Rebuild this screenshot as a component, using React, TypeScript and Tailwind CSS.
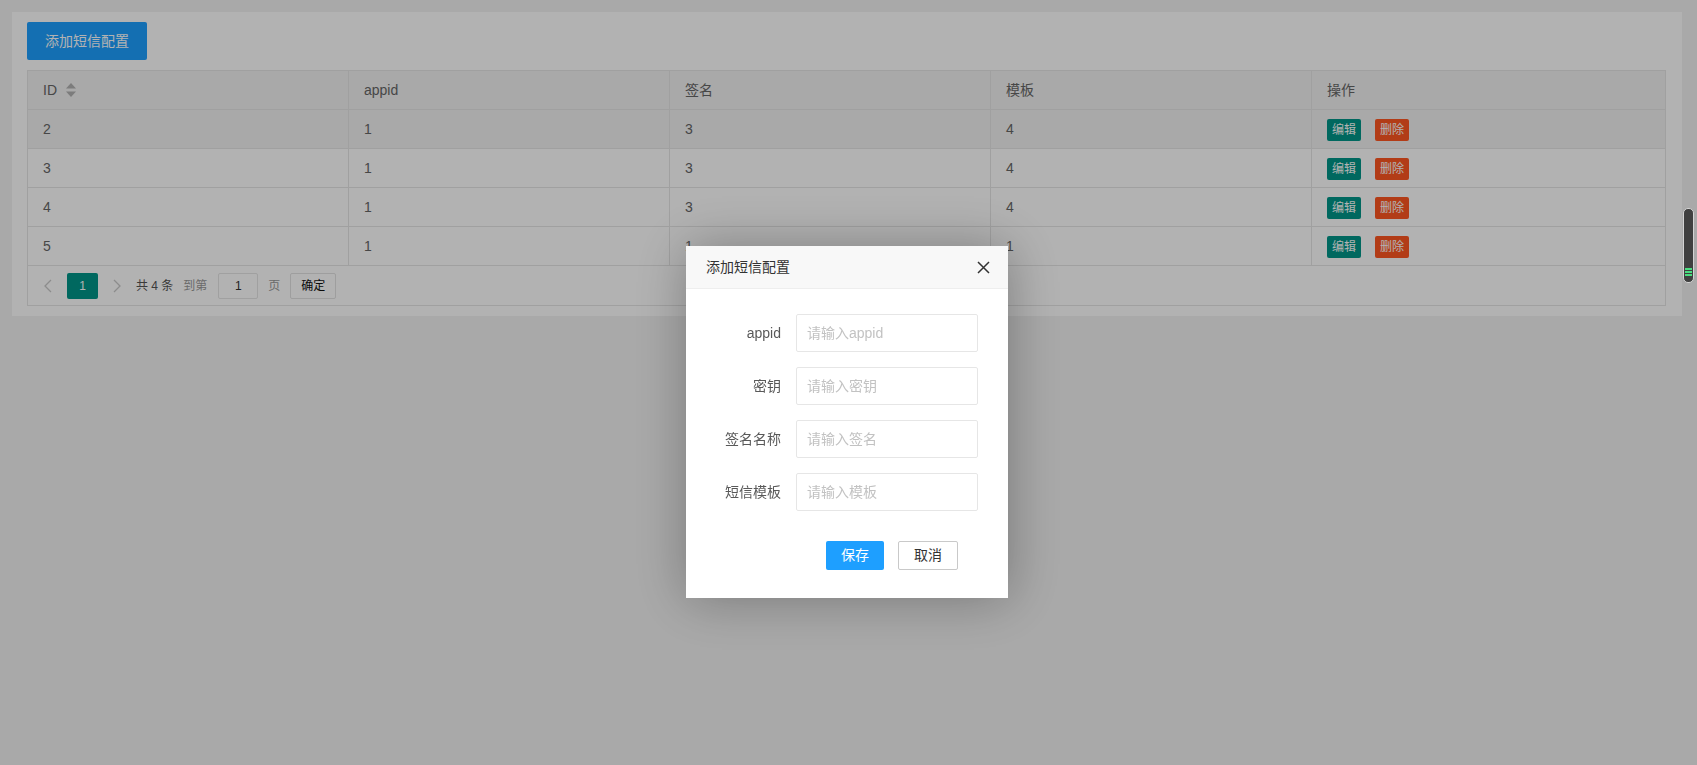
import React from 'react';

const FONT = { fontFamily: '"Liberation Sans", "Noto Sans CJK SC", sans-serif' };

interface Row {
  id: number;
  appid: string;
  sign: string;
  tpl: string;
}

const rows: Row[] = [
  { id: 2, appid: '1', sign: '3', tpl: '4' },
  { id: 3, appid: '1', sign: '3', tpl: '4' },
  { id: 4, appid: '1', sign: '3', tpl: '4' },
  { id: 5, appid: '1', sign: '1', tpl: '1' },
];

const COLS = 'grid grid-cols-[321px_321px_321px_321px_1fr]';

const SortIcon = () => (
  <svg width="10" height="14" viewBox="0 0 10 14" className="ml-[9px]">
    <path d="M5 0 L10 5.5 L0 5.5 Z" fill="#b2b2b2" />
    <path d="M0 8.5 L10 8.5 L5 14 Z" fill="#b2b2b2" />
  </svg>
);

const Cell: React.FC<{ children?: React.ReactNode; last?: boolean }> = ({ children, last }) => (
  <div
    className={`h-[38px] flex items-center px-[15px] text-[14px] text-[#666] ${
      last ? '' : 'border-r border-[#e6e6e6]'
    }`}
  >
    {children}
  </div>
);

const Field: React.FC<{ label: string; placeholder: string }> = ({ label, placeholder }) => (
  <div className="flex">
    <label className="w-[110px] pr-[15px] text-right leading-[38px] text-[14px] text-[#595959]">{label}</label>
    <input
      placeholder={placeholder}
      className="w-[182px] h-[38px] border border-[#e6e6e6] rounded-[2px] pl-[10px] text-[14px] outline-none placeholder:text-[#c2c2c2] bg-white"
    />
  </div>
);

export default function App() {
  return (
    <div className="min-h-[765px] bg-[#f2f2f2] pt-[12px] pl-[12px] pr-[15px]" style={FONT}>
      <div className="bg-white pt-[10px] pb-[10px] pl-[15px] pr-[16px]">
        <button className="h-[38px] px-[18px] bg-[#1e9fff] text-white text-[14px] rounded-[2px]">添加短信配置</button>

        <div className="mt-[10px] border border-[#e6e6e6]">
          <div className={`${COLS} bg-[#f2f2f2] border-b border-[#e6e6e6]`}>
            <Cell>
              ID
              <SortIcon />
            </Cell>
            <Cell>appid</Cell>
            <Cell>签名</Cell>
            <Cell>模板</Cell>
            <Cell last>操作</Cell>
          </div>
          {rows.map((r, i) => (
            <div key={r.id} className={`${COLS} border-b border-[#e6e6e6] ${i === 0 ? 'bg-[#f2f2f2]' : 'bg-white'}`}>
              <Cell>{r.id}</Cell>
              <Cell>{r.appid}</Cell>
              <Cell>{r.sign}</Cell>
              <Cell>{r.tpl}</Cell>
              <Cell last>
                <span className="mt-[1px] h-[22px] px-[5px] leading-[22px] text-[12px] rounded-[2px] bg-[#009688] text-white">编辑</span>
                <span className="mt-[1px] ml-[14px] h-[22px] px-[5px] leading-[22px] text-[12px] rounded-[2px] bg-[#ff5722] text-white">删除</span>
              </Cell>
            </div>
          ))}

          <div className="h-[39px] flex items-center pl-[5px] text-[12px]">
            <span className="w-[30px] flex justify-center">
              <svg width="8" height="14" viewBox="0 0 8 14">
                <path d="M7 1 L1 7 L7 13" stroke="#c9c9c9" strokeWidth="1.3" fill="none" />
              </svg>
            </span>
            <span className="ml-[4px] w-[31px] h-[26px] flex items-center justify-center bg-[#009688] text-white rounded-[2px]">1</span>
            <span className="ml-[4px] w-[30px] flex justify-center">
              <svg width="8" height="14" viewBox="0 0 8 14">
                <path d="M1 1 L7 7 L1 13" stroke="#c9c9c9" strokeWidth="1.3" fill="none" />
              </svg>
            </span>
            <span className="ml-[4px] text-[#555]">共 4 条</span>
            <span className="ml-[10px] text-[#999]">到第</span>
            <span className="ml-[11px] w-[40px] h-[26px] border border-[#e6e6e6] rounded-[2px] flex items-center justify-center text-[#333]">
              1
            </span>
            <span className="ml-[10px] text-[#999]">页</span>
            <span className="ml-[10px] w-[46px] h-[26px] border border-[#e2e2e2] rounded-[2px] flex items-center justify-center text-[#111] bg-white">
              确定
            </span>
          </div>
        </div>
      </div>

      {/* 遮罩 */}
      <div className="fixed inset-0 bg-black/30" />

      {/* 弹窗 */}
      <div className="fixed left-[686px] top-[246px] w-[322px] h-[352px] bg-white shadow-[1px_1px_50px_rgba(0,0,0,0.3)]">
        <div className="h-[43px] bg-[#f8f8f8] border-b border-[#eee] flex items-center justify-between pl-[20px] pr-[18px]">
          <span className="text-[14px] text-[#333]">添加短信配置</span>
          <svg width="13" height="13" viewBox="0 0 13 13">
            <path d="M1 1 L12 12 M12 1 L1 12" stroke="#333" strokeWidth="1.5" />
          </svg>
        </div>
        <div className="pt-[25px] flex flex-col gap-[15px]">
          <Field label="appid" placeholder="请输入appid" />
          <Field label="密钥" placeholder="请输入密钥" />
          <Field label="签名名称" placeholder="请输入签名" />
          <Field label="短信模板" placeholder="请输入模板" />
          <div className="flex ml-[140px] mt-[15px]">
            <button className="h-[29px] w-[58px] bg-[#1e9fff] text-white text-[14px] rounded-[2px]">保存</button>
            <button className="ml-[14px] h-[29px] w-[60px] bg-white border border-[#c9c9c9] text-[#333] text-[14px] rounded-[2px]">
              取消
            </button>
          </div>
        </div>
      </div>

      {/* 右侧小滚动控件 */}
      <div className="fixed left-[1683px] top-[208px] w-[11px] h-[75px] rounded-[5px] border border-[#d4d4d4] bg-[#404040] flex flex-col justify-end items-center pb-[6px] gap-[1px]">
        <span className="w-[7px] h-[2px] bg-[#4ade80]" />
        <span className="w-[7px] h-[2px] bg-[#4ade80]" />
        <span className="w-[7px] h-[2px] bg-[#4ade80]" />
      </div>
    </div>
  );
}
